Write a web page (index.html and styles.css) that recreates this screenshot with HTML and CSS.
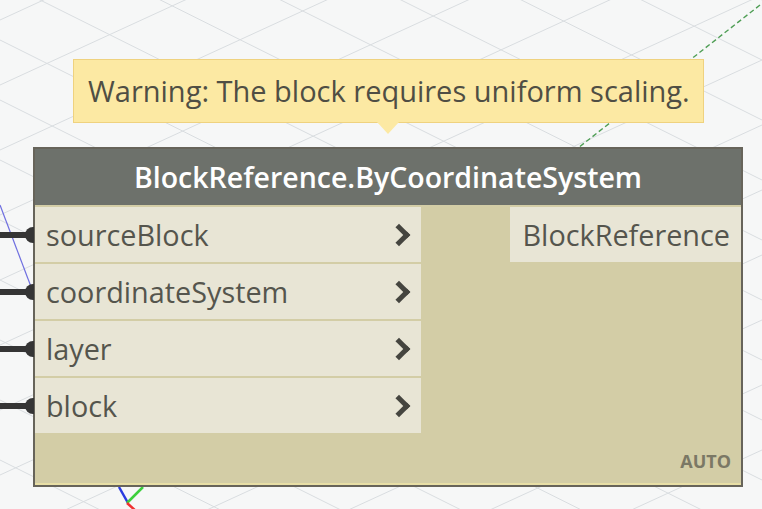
FILE: index.html
```html
<!DOCTYPE html>
<html>
<head>
<meta charset="utf-8">
<link rel="stylesheet" href="styles.css">
</head>
<body>
<div class="canvas">
  <svg class="grid" width="762" height="509" viewBox="0 0 762 509">
    <g stroke="#d9dde0" stroke-width="1">
      <line x1="0" y1="-380" x2="762" y2="0"/>
      <line x1="0" y1="-320" x2="762" y2="60"/>
      <line x1="0" y1="-260" x2="762" y2="120"/>
      <line x1="0" y1="-200" x2="762" y2="180"/>
      <line x1="0" y1="-140" x2="762" y2="240"/>
      <line x1="0" y1="-80" x2="762" y2="300"/>
      <line x1="0" y1="-20" x2="762" y2="360"/>
      <line x1="0" y1="40" x2="762" y2="420"/>
      <line x1="0" y1="100" x2="762" y2="480"/>
      <line x1="0" y1="160" x2="762" y2="540"/>
      <line x1="0" y1="220" x2="762" y2="600"/>
      <line x1="0" y1="280" x2="762" y2="660"/>
      <line x1="0" y1="340" x2="762" y2="720"/>
      <line x1="0" y1="400" x2="762" y2="780"/>
      <line x1="0" y1="460" x2="762" y2="840"/>
      <line x1="0" y1="20" x2="762" y2="-330"/>
      <line x1="0" y1="85" x2="762" y2="-265"/>
      <line x1="0" y1="150" x2="762" y2="-200"/>
      <line x1="0" y1="215" x2="762" y2="-135"/>
      <line x1="0" y1="280" x2="762" y2="-70"/>
      <line x1="0" y1="345" x2="762" y2="-5"/>
      <line x1="0" y1="410" x2="762" y2="60"/>
      <line x1="0" y1="475" x2="762" y2="125"/>
      <line x1="0" y1="540" x2="762" y2="190"/>
      <line x1="0" y1="605" x2="762" y2="255"/>
      <line x1="0" y1="670" x2="762" y2="320"/>
      <line x1="0" y1="735" x2="762" y2="385"/>
      <line x1="0" y1="800" x2="762" y2="450"/>
      <line x1="0" y1="865" x2="762" y2="515"/>
    </g>
    <line x1="760" y1="5" x2="578" y2="148" stroke="#4f9e55" stroke-width="1.4" stroke-dasharray="5 3"/>
    <line x1="0" y1="205" x2="33" y2="292" stroke="#6f6fe0" stroke-width="1.2"/>
    <line x1="119" y1="487" x2="128" y2="503" stroke="#2a3be0" stroke-width="2.5"/>
    <line x1="143" y1="487" x2="127" y2="503" stroke="#3ccf3c" stroke-width="2.5"/>
    <line x1="127" y1="503" x2="137" y2="512" stroke="#f03030" stroke-width="2.5"/>
  </svg>

  <div class="stage">
    <div class="tooltip">Warning: The block requires uniform scaling.</div>

    <div class="node">
      <div class="header">BlockReference.ByCoordinateSystem</div>
      <div class="body">
        <div class="inputs">
          <div class="port-row"><span class="label">sourceBlock</span><span class="chev"></span></div>
          <div class="port-row"><span class="label">coordinateSystem</span><span class="chev"></span></div>
          <div class="port-row"><span class="label">layer</span><span class="chev"></span></div>
          <div class="port-row"><span class="label">block</span><span class="chev"></span></div>
        </div>
        <div class="outputs">
          <div class="out-row">BlockReference</div>
        </div>
      </div>
      <div class="footer">AUTO</div>
    </div>
  </div>
</div>
</body>
</html>
```

FILE: styles.css
```css
html, body {
  margin: 0;
  padding: 0;
}

body {
  width: 762px;
  height: 509px;
  overflow: hidden;
  background: #f6f7f7;
  font-family: "Open Sans", "Noto Sans", sans-serif;
}

.canvas {
  position: relative;
  width: 762px;
  height: 509px;
}

.grid {
  position: absolute;
  left: 0;
  top: 0;
}

.stage {
  position: relative;
  padding-top: 59px;
  display: flex;
  flex-direction: column;
  align-items: flex-start;
}

.tooltip {
  position: relative;
  margin-left: 73px;
  width: 631px;
  height: 64px;
  box-sizing: border-box;
  background: #fce9a3;
  border: 1px solid #efd27f;
  color: #4f4e44;
  font-size: 29px;
  line-height: 62px;
  padding-left: 14px;
  white-space: nowrap;
}

.tooltip::after {
  content: "";
  position: absolute;
  left: 303px;
  bottom: -12px;
  width: 0;
  height: 0;
  border-left: 11px solid transparent;
  border-right: 11px solid transparent;
  border-top: 12px solid #fce9a3;
}

.node {
  margin-top: 24px;
  margin-left: 33px;
  width: 710px;
  height: 340px;
  box-sizing: border-box;
  border: 2px solid #67645a;
  background: #d3cda6;
  display: flex;
  flex-direction: column;
  box-shadow: inset 0 -2px 0 #e8dfa6;
}

.header {
  height: 56px;
  background: #6d716b;
  color: #ffffff;
  font-size: 28.5px;
  font-weight: 600;
  line-height: 56px;
  text-align: center;
  flex: none;
  white-space: nowrap;
}

.body {
  display: flex;
  margin-top: 2px;
}

.inputs {
  width: 386px;
  display: flex;
  flex-direction: column;
  gap: 2px;
}

.port-row {
  position: relative;
  height: 55px;
  background: #e8e5d5;
  display: flex;
  align-items: center;
  justify-content: space-between;
  padding-left: 11px;
  padding-right: 6px;
  color: #55554d;
  font-size: 28.8px;
}

.port-row::before {
  content: "";
  position: absolute;
  left: -37px;
  top: 25px;
  width: 30px;
  height: 6px;
  background: #353535;
}

.port-row::after {
  content: "";
  position: absolute;
  left: -10px;
  top: 20px;
  width: 9px;
  height: 16px;
  background: #353535;
  border-radius: 9px 0 0 9px;
}

.chev {
  width: 11px;
  height: 11px;
  border-top: 5px solid #45453f;
  border-right: 5px solid #45453f;
  transform: rotate(45deg);
  margin-right: 8px;
}

.outputs {
  flex: 1;
  display: flex;
  justify-content: flex-end;
  align-items: flex-start;
}

.out-row {
  width: 231px;
  height: 55px;
  box-sizing: border-box;
  background: #e8e5d5;
  color: #55554d;
  font-size: 28.8px;
  line-height: 55px;
  text-align: right;
  padding-right: 11px;
}

.footer {
  margin-top: auto;
  text-align: right;
  font-weight: 700;
  font-size: 18px;
  color: #7b7865;
  padding-right: 10px;
  padding-bottom: 12px;
}
```
